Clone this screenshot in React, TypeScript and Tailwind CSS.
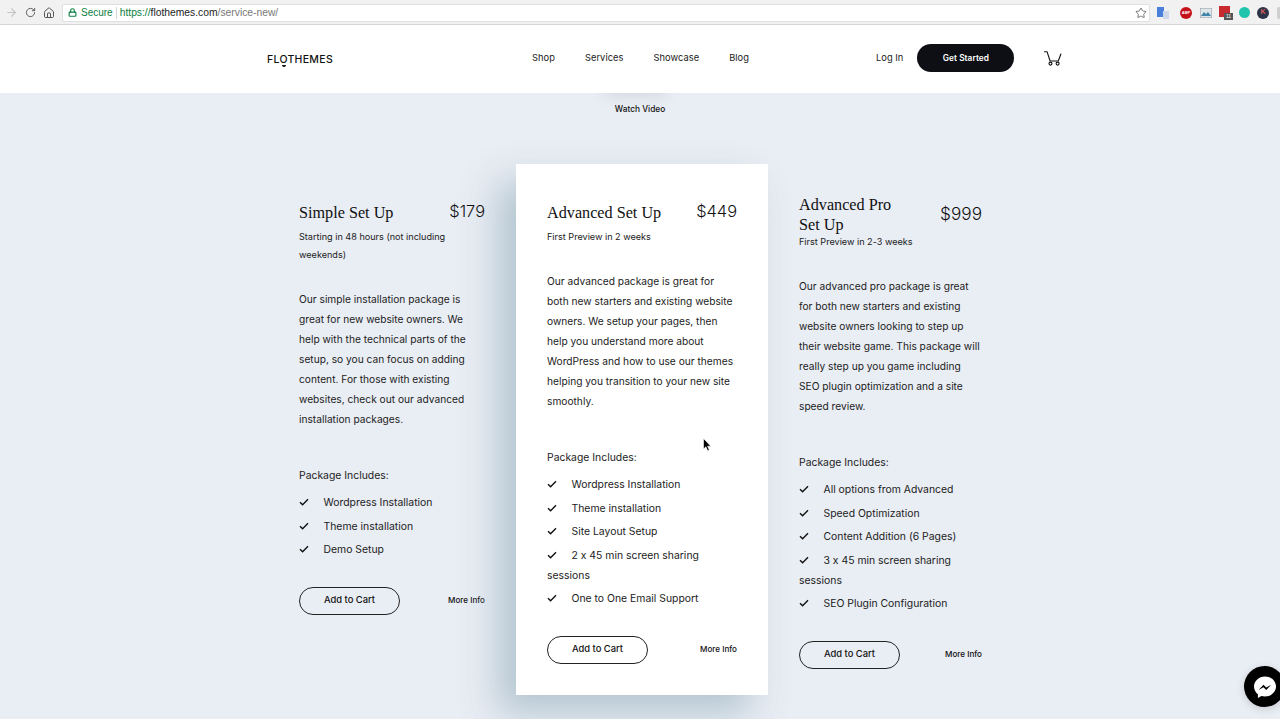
import { ArrowRight, Home, Lock, RotateCw, Star } from 'lucide-react';

interface PlanProps {
  title: string[];
  price: string;
  subtitle: string[];
  body: string[];
  items: string[][];
  className: string;
}

function BrowserBar() {
  return (
    <div className="h-[25px] pt-[1px] bg-[#f1f1f1] border-b border-[#d4d4d4] flex items-center">
      <div className="w-[62px] shrink-0 flex items-center gap-[7px] pl-[5px] text-[#555]">
        <ArrowRight size={13} className="text-[#c2c2c2]" />
        <RotateCw size={11} strokeWidth={2} />
        <Home size={12} strokeWidth={2} />
      </div>
      <div className="w-[1088px] shrink-0 h-[18px] bg-white rounded-[2px] border border-[#e0e0e0] flex items-center pl-[5px] text-[10.3px] font-['Liberation_Sans',sans-serif]">
        <Lock size={9} strokeWidth={3} className="text-[#0b8043]" />
        <span className="ml-[4px] text-[10px] text-[#0b8043]">Secure</span>
        <span className="ml-[3px] mr-[3px] h-[12px] w-px bg-[#d5d5d5]" />
        <span className="text-[#0b8043]">https://</span>
        <span className="text-[#222]">flothemes.com</span>
        <span className="text-[#777]">/service-new/</span>
        <Star size={12} strokeWidth={1.6} className="ml-auto mr-[2px] text-[#555]" />
      </div>
      <div className="flex items-center ml-[6px] shrink-0">
        <svg width="14" height="14" viewBox="0 0 14 14" className="mr-[10px]">
          <path d="M1 1h7v10H1z" fill="#4a7fdc" />
          <path d="M7 5h6v8H7z" fill="#cfd8ea" />
        </svg>
        <span className="w-[12px] h-[12px] rounded-full bg-[#c5121a] text-white text-[4px] font-bold flex items-center justify-center mr-[8px] font-['Liberation_Sans',sans-serif]">ABP</span>
        <svg width="12" height="10" viewBox="0 0 12 10" className="mr-[7px]">
          <rect width="12" height="10" fill="#dfe6ea" stroke="#8f9ba3" />
          <path d="M1 8l3-4 2 2 2-2 3 4z" fill="#3f86a8" />
        </svg>
        <div className="relative w-[14px] h-[14px] mr-[5.5px]">
          <div className="w-[11px] h-[11px] bg-[#c92a2f]" />
          <span className="absolute right-0 bottom-0 w-[9px] h-[7px] bg-[#555] text-white text-[5px] leading-[7px] text-center font-['Liberation_Sans',sans-serif]">11</span>
        </div>
        <div className="w-[11px] h-[11px] rounded-full bg-[#1fc4ad] mr-[7.5px]" />
        <span className="w-[12px] h-[12px] rounded-full bg-[#2c3347] text-[#d95b5b] text-[7px] font-bold flex items-center justify-center font-['Liberation_Sans',sans-serif]">K</span>
        <div className="w-[12px] h-[12px] rounded-[2px] bg-[#cfcfcf] ml-[8px]" />
      </div>
    </div>
  );
}

function Header() {
  return (
    <header className="relative z-10 h-[68px] bg-white flex items-center pl-[267px] text-[9.3px] tracking-[0.05px] text-[#222]">
      <div className="relative w-[66px] mt-[2px] text-[10.5px] font-medium tracking-[0.3px] text-[#111] whitespace-nowrap">
        FLOTHEMES
        <span className="absolute left-[15px] top-[13px] w-[4px] h-[2px] rounded-b-full bg-[#111]" />
      </div>
      <nav className="flex gap-[30px] ml-[199px] -mt-[3px]">
        <a>Shop</a>
        <a>Services</a>
        <a>Showcase</a>
        <a>Blog</a>
      </nav>
      <a className="ml-[127px] -mt-[2px]">Log In</a>
      <button className="ml-[14px] -mt-[2px] w-[97px] h-[28px] rounded-full bg-[#0d0f14] text-white text-[8.3px] font-semibold">Get Started</button>
      <svg width="18" height="15" viewBox="0 0 18 15" fill="none" stroke="#111" strokeWidth="1.1" className="ml-[30px] -mt-[2px]">
        <path d="M0.5 0.8h2.6l3 9.2h8.2l2.6-7" strokeLinecap="round" strokeLinejoin="round" />
        <circle cx="6.5" cy="12.6" r="1.5" />
        <circle cx="13.6" cy="12.6" r="1.5" />
      </svg>
    </header>
  );
}

function Plan({ title, price, subtitle, body, items, className }: PlanProps) {
  const twoLines = title.length > 1;
  return (
    <section className={className}>
      <div className="flex items-center justify-between">
        <h2 className="font-['Liberation_Serif',serif] text-[16.2px] leading-[20px] text-[#111]">
          {title.map((line) => <div key={line}>{line}</div>)}
        </h2>
        <span className={`${twoLines ? '-translate-y-[1px] text-[17.2px]' : '-translate-y-[2px] text-[16.4px]'} font-light leading-[20px] text-[#111]`}>{price}</span>
      </div>
      <p className={`${twoLines ? '-mt-[2px]' : 'mt-[5px]'} text-[9.1px] leading-[18px] text-[#222]`}>
        {subtitle.map((line) => <span key={line} className="block">{line}</span>)}
      </p>
      <p className="mt-[25px] text-[10.2px] leading-[20px] text-[#222]">
        {body.map((line) => <span key={line} className="block whitespace-nowrap">{line}</span>)}
      </p>
      <p className="mt-[37px] text-[10.4px] leading-[20px] text-[#222]">Package Includes:</p>
      <ul className="mt-[7px] text-[10.4px] leading-[20px] text-[#222]">
        {items.map((lines) => (
          <li key={lines[0]} className="mb-[3.5px] whitespace-nowrap">
            <span className="inline-flex w-[24.5px]">
              <svg width="10" height="8" viewBox="0 0 10 8" fill="none" stroke="#111" strokeWidth="1.4">
                <path d="M1 4.2l2.6 2.6L9 1.2" />
              </svg>
            </span>
            {lines[0]}
            {lines[1] && <span className="block">{lines[1]}</span>}
          </li>
        ))}
      </ul>
      <div className="mt-[26.5px] flex items-center justify-between">
        <button className="w-[101px] h-[28px] rounded-full border border-[#222] text-[9.4px] font-medium text-[#111]">Add to Cart</button>
        <a className="text-[8.1px] font-medium text-[#111]">More Info</a>
      </div>
    </section>
  );
}

export default function App() {
  return (
    <div className="relative w-[1280px] h-[720px] overflow-hidden bg-[#e9edf4] border-b border-white font-['Inter',sans-serif] [font-feature-settings:'calt'_0]">
      <BrowserBar />
      <Header />
      <div className="relative h-[30px] text-center text-[8.3px] font-medium leading-[32px] text-[#111]">
        <span className="absolute left-[605px] -top-[20px] w-[60px] h-[20px] shadow-[0_3px_14px_rgba(170,180,190,0.35)]" />
        Watch Video
      </div>
      <main className="flex items-start pl-[299px]">
        <Plan
          className="w-[186px] mt-[80px]"
          title={['Simple Set Up']}
          price="$179"
          subtitle={['Starting in 48 hours (not including', 'weekends)']}
          body={[
            'Our simple installation package is',
            'great for new website owners. We',
            'help with the technical parts of the',
            'setup, so you can focus on adding',
            'content. For those with existing',
            'websites, check out our advanced',
            'installation packages.',
          ]}
          items={[['Wordpress Installation'], ['Theme installation'], ['Demo Setup']]}
        />
        <Plan
          className="w-[252px] ml-[31px] mt-[41px] h-[531px] bg-white px-[31px] pt-[39px] shadow-[-18px_18px_34px_rgba(170,190,202,0.85)]"
          title={['Advanced Set Up']}
          price="$449"
          subtitle={['First Preview in 2 weeks']}
          body={[
            'Our advanced package is great for',
            'both new starters and existing website',
            'owners. We setup your pages, then',
            'help you understand more about',
            'WordPress and how to use our themes',
            'helping you transition to your new site',
            'smoothly.',
          ]}
          items={[
            ['Wordpress Installation'],
            ['Theme installation'],
            ['Site Layout Setup'],
            ['2 x 45 min screen sharing', 'sessions'],
            ['One to One Email Support'],
          ]}
        />
        <Plan
          className="w-[183px] ml-[31px] mt-[72px]"
          title={['Advanced Pro', 'Set Up']}
          price="$999"
          subtitle={['First Preview in 2-3 weeks']}
          body={[
            'Our advanced pro package is great',
            'for both new starters and existing',
            'website owners looking to step up',
            'their website game. This package will',
            'really step up you game including',
            'SEO plugin optimization and a site',
            'speed review.',
          ]}
          items={[
            ['All options from Advanced'],
            ['Speed Optimization'],
            ['Content Addition (6 Pages)'],
            ['3 x 45 min screen sharing', 'sessions'],
            ['SEO Plugin Configuration'],
          ]}
        />
      </main>
      <div className="absolute left-[1244px] top-[666px] w-[41px] h-[41px] rounded-full bg-black flex items-center justify-center shadow-[0_2px_8px_rgba(0,0,0,0.15)]">
        <svg width="28" height="28" viewBox="0 0 28 28">
          <path d="M14 3.5C7.9 3.5 3 8 3 13.6c0 3.1 1.5 5.9 3.9 7.7V25l3.5-2c1.1.3 2.300.5 3.600.5 6.100 0 11-4.400 11-9.900S20.100 3.500 14 3.500z" fill="#fff" />
          <path d="M7.500 17l5-5.300 2.700 2.700 5-2.700-5 5.300-2.700-2.700z" fill="#000" />
        </svg>
      </div>
      {/* cursor */}
      <svg width="9" height="14" viewBox="0 0 9 14" className="absolute left-[703px] top-[438px]">
        <path d="M0.500 0.500v10.500l2.400-2.200 1.700 4 1.700-.700-1.700-3.900h3.200z" fill="#000" stroke="#fff" strokeWidth="0.6" />
      </svg>
    </div>
  );
}
